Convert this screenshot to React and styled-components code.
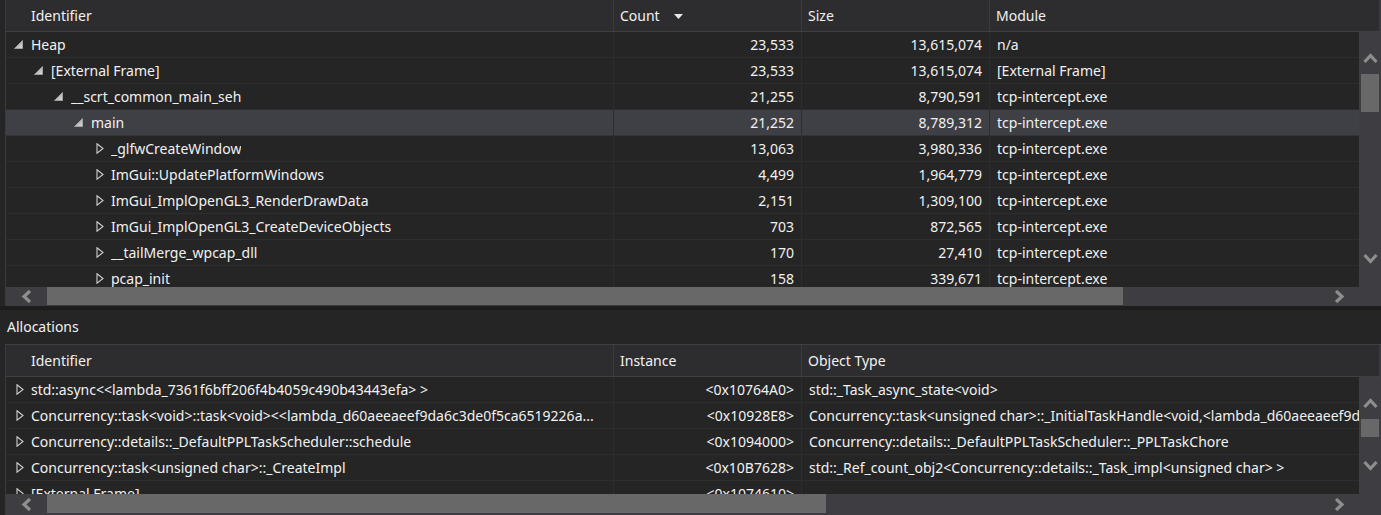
import React from 'react'
import styled, { createGlobalStyle } from 'styled-components'

const GlobalStyle = createGlobalStyle`
  html, body {
    margin: 0;
    padding: 0;
    background: #252526;
  }
  body {
    font-family: "Noto Sans", "Open Sans", sans-serif;
    font-size: 14px;
    color: #f1f1f1;
  }
`

const Page = styled.div`
  width: 1381px;
  height: 515px;
  overflow: hidden;
  display: flex;
  flex-direction: column;
  background: #252526;
`

const Grid = styled.div`
  margin-left: 5px;
  display: flex;
  flex-direction: column;
  border-left: 1px solid #3a3a3f;
  border-top: ${p => (p.$boxed ? '1px solid #3f3f46' : 'none')};
`

const Header = styled.div`
  display: grid;
  grid-template-columns: ${p => p.$cols};
  height: 31px;
  background: #2d2d30;
  border-bottom: 1px solid #3f3f46;
  border-right: 2px solid #3a3a3f;
`

const HeadCell = styled.div`
  display: flex;
  align-items: center;
  padding-left: 6px;
  border-right: 1px solid #3a3a3f;
  white-space: nowrap;
  &:last-child {
    border-right: none;
  }
`

const SortArrow = styled.svg`
  margin-left: 14px;
  margin-top: 1px;
`

const Body = styled.div`
  display: grid;
  grid-template-columns: 1fr 22px;
  grid-template-rows: ${p => p.$rows};
`

const Rows = styled.div`
  overflow: hidden;
`

const Row = styled.div`
  display: grid;
  grid-template-columns: ${p => p.$cols};
  height: 26px;
  box-sizing: border-box;
  border-bottom: 1px solid ${p => (p.$selected ? '#333337' : '#2d2d30')};
  background: ${p => (p.$selected ? '#3f3f46' : '#252526')};
`

const Cell = styled.div`
  display: flex;
  align-items: center;
  justify-content: ${p => (p.$right ? 'flex-end' : 'flex-start')};
  padding: ${p => (p.$right ? '0 7px 1px 0' : '0 0 1px 7px')};
  border-right: 1px solid #2d2d30;
  white-space: nowrap;
  overflow: hidden;
  &:last-child {
    border-right: none;
  }
`

const IdentCell = styled(Cell)`
  padding: 0 6px 1px 0;
`

const IdentText = styled.span`
  overflow: hidden;
  text-overflow: ellipsis;
`

const Expander = styled.span`
  flex: none;
  display: flex;
  align-items: center;
  width: 25px;
  height: 100%;
  padding-left: ${p => (p.$open ? 8 : 10)}px;
  box-sizing: border-box;
`

const VScroll = styled.div`
  background: #3e3e42;
  display: flex;
  flex-direction: column;
  align-items: center;
`

const Corner = styled.div`
  background: #3e3e42;
`

const VArrowBox = styled.div`
  flex: none;
  height: 42px;
  display: flex;
  justify-content: center;
  align-items: ${p => (p.$up ? 'flex-end' : 'flex-start')};
  box-sizing: border-box;
  padding: ${p => (p.$up ? '0 0 10px' : '8px 0 0')};
`

const VTrack = styled.div`
  flex: 1;
  width: 100%;
  display: flex;
  flex-direction: column;
  align-items: center;
`

const VThumb = styled.div`
  width: 18px;
  background: #686868;
`

const HScroll = styled.div`
  background: #3e3e42;
  display: flex;
  align-items: center;
`

const HArrowBox = styled.div`
  flex: none;
  width: 41px;
  height: 100%;
  display: flex;
  align-items: center;
  justify-content: center;
`

const HTrack = styled.div`
  flex: 1;
  height: 100%;
  display: flex;
  align-items: flex-start;
`

const HThumb = styled.div`
  background: #686868;
`

const Divider = styled.div`
  height: 4px;
  background: #1c1c1d;
`

const SectionLabel = styled.div`
  height: 34px;
  display: flex;
  align-items: center;
  padding-left: 7px;
  padding-bottom: 1px;
  box-sizing: border-box;
`

const Triangle = ({ open }) =>
  open ? (
    <svg width="9" height="9" viewBox="0 0 9 9">
      <defs>
        <linearGradient id="tri" x1="0" y1="0" x2="1" y2="1">
          <stop offset="0" stopColor="#8a8a8a" />
          <stop offset="1" stopColor="#e0e0e0" />
        </linearGradient>
      </defs>
      <path d="M0.5 8.5 L8.5 8.5 L8.5 0.5 Z" fill="url(#tri)" stroke="#a8a8a8" strokeWidth="0.8" />
    </svg>
  ) : (
    <svg width="8" height="11" viewBox="0 0 8 11">
      <path d="M1 0.8 L7 5.5 L1 10.2 Z" fill="none" stroke="#cfcfcf" strokeWidth="1.1" />
    </svg>
  )

const Chevron = ({ dir }) => {
  const d = {
    up: 'M1.5 10 L7.5 3.5 L13.5 10',
    down: 'M1.5 2 L7.5 8.5 L13.5 2',
    left: 'M9 1 L3 6.5 L9 12',
    right: 'M3 1 L9 6.5 L3 12',
  }[dir]
  const vertical = dir === 'up' || dir === 'down'
  return (
    <svg width={vertical ? 15 : 12} height={vertical ? 12 : 13} viewBox={vertical ? '0 0 15 12' : '0 0 12 13'}>
      <path d={d} fill="none" stroke="#8e8e8e" strokeWidth="3.2" />
    </svg>
  )
}

const VerticalBar = ({ thumbTop, thumbHeight }) => (
  <VScroll>
    <VArrowBox $up>
      <Chevron dir="up" />
    </VArrowBox>
    <VTrack>
      <VThumb style={{ marginTop: thumbTop, height: thumbHeight }} />
    </VTrack>
    <VArrowBox>
      <Chevron dir="down" />
    </VArrowBox>
  </VScroll>
)

const HorizontalBar = ({ thumbWidth, thumbHeight }) => (
  <HScroll>
    <HArrowBox>
      <Chevron dir="left" />
    </HArrowBox>
    <HTrack>
      <HThumb style={{ width: thumbWidth, height: thumbHeight }} />
    </HTrack>
    <HArrowBox>
      <Chevron dir="right" />
    </HArrowBox>
  </HScroll>
)

const heapCols = '608px 188px 188px 1fr'
const allocCols = '608px 188px 1fr'

const heapRows = [
  { name: 'Heap', level: 0, open: true, count: '23,533', size: '13,615,074', module: 'n/a' },
  { name: '[External Frame]', level: 1, open: true, count: '23,533', size: '13,615,074', module: '[External Frame]' },
  { name: '__scrt_common_main_seh', level: 2, open: true, count: '21,255', size: '8,790,591', module: 'tcp-intercept.exe' },
  { name: 'main', level: 3, open: true, selected: true, count: '21,252', size: '8,789,312', module: 'tcp-intercept.exe' },
  { name: '_glfwCreateWindow', level: 4, count: '13,063', size: '3,980,336', module: 'tcp-intercept.exe' },
  { name: 'ImGui::UpdatePlatformWindows', level: 4, count: '4,499', size: '1,964,779', module: 'tcp-intercept.exe' },
  { name: 'ImGui_ImplOpenGL3_RenderDrawData', level: 4, count: '2,151', size: '1,309,100', module: 'tcp-intercept.exe' },
  { name: 'ImGui_ImplOpenGL3_CreateDeviceObjects', level: 4, count: '703', size: '872,565', module: 'tcp-intercept.exe' },
  { name: '__tailMerge_wpcap_dll', level: 4, count: '170', size: '27,410', module: 'tcp-intercept.exe' },
  { name: 'pcap_init', level: 4, count: '158', size: '339,671', module: 'tcp-intercept.exe' },
]

const allocRows = [
  {
    name: 'std::async<<lambda_7361f6bff206f4b4059c490b43443efa> >',
    instance: '<0x10764A0>',
    type: 'std::_Task_async_state<void>',
  },
  {
    name: 'Concurrency::task<void>::task<void><<lambda_d60aeeaeef9da6c3de0f5ca6519226a...',
    instance: '<0x10928E8>',
    type: 'Concurrency::task<unsigned char>::_InitialTaskHandle<void,<lambda_d60aeeaeef9da6c3de0f5ca6519226a>,std::nothrow_t>',
  },
  {
    name: 'Concurrency::details::_DefaultPPLTaskScheduler::schedule',
    instance: '<0x1094000>',
    type: 'Concurrency::details::_DefaultPPLTaskScheduler::_PPLTaskChore',
  },
  {
    name: 'Concurrency::task<unsigned char>::_CreateImpl',
    instance: '<0x10B7628>',
    type: 'std::_Ref_count_obj2<Concurrency::details::_Task_impl<unsigned char> >',
  },
  { name: '[External Frame]', instance: '<0x1074610>', type: '' },
]

const Ident = ({ level = 0, open, children }) => (
  <IdentCell>
    <Expander $open={open} style={{ marginLeft: level * 20 }}>
      <Triangle open={open} />
    </Expander>
    <IdentText>{children}</IdentText>
  </IdentCell>
)

export default function App() {
  return (
    <Page>
      <GlobalStyle />
      <Grid>
        <Header $cols={heapCols}>
          <HeadCell style={{ paddingLeft: 25 }}>Identifier</HeadCell>
          <HeadCell>
            Count
            <SortArrow width="9" height="5" viewBox="0 0 9 5">
              <path d="M0 0 L9 0 L4.5 5 Z" fill="#e8e8e8" />
            </SortArrow>
          </HeadCell>
          <HeadCell>Size</HeadCell>
          <HeadCell>Module</HeadCell>
        </Header>
        <Body $rows="255px 19px">
          <Rows>
            {heapRows.map(r => (
              <Row key={r.name} $cols={heapCols} $selected={r.selected}>
                <Ident level={r.level} open={r.open}>
                  {r.name}
                </Ident>
                <Cell $right>{r.count}</Cell>
                <Cell $right>{r.size}</Cell>
                <Cell>{r.module}</Cell>
              </Row>
            ))}
          </Rows>
          <VerticalBar thumbTop={0} thumbHeight={38} />
          <HorizontalBar thumbWidth={1076} thumbHeight={18} />
          <Corner />
        </Body>
      </Grid>
      <Divider />
      <SectionLabel>Allocations</SectionLabel>
      <Grid $boxed>
        <Header $cols={allocCols}>
          <HeadCell style={{ paddingLeft: 25 }}>Identifier</HeadCell>
          <HeadCell>Instance</HeadCell>
          <HeadCell>Object Type</HeadCell>
        </Header>
        <Body $rows="117px 21px">
          <Rows>
            {allocRows.map(r => (
              <Row key={r.instance} $cols={allocCols}>
                <Ident>{r.name}</Ident>
                <Cell $right>{r.instance}</Cell>
                <Cell>{r.type}</Cell>
              </Row>
            ))}
          </Rows>
          <VerticalBar thumbTop={0} thumbHeight={18} />
          <HorizontalBar thumbWidth={779} thumbHeight={19} />
          <Corner />
        </Body>
      </Grid>
    </Page>
  )
}
